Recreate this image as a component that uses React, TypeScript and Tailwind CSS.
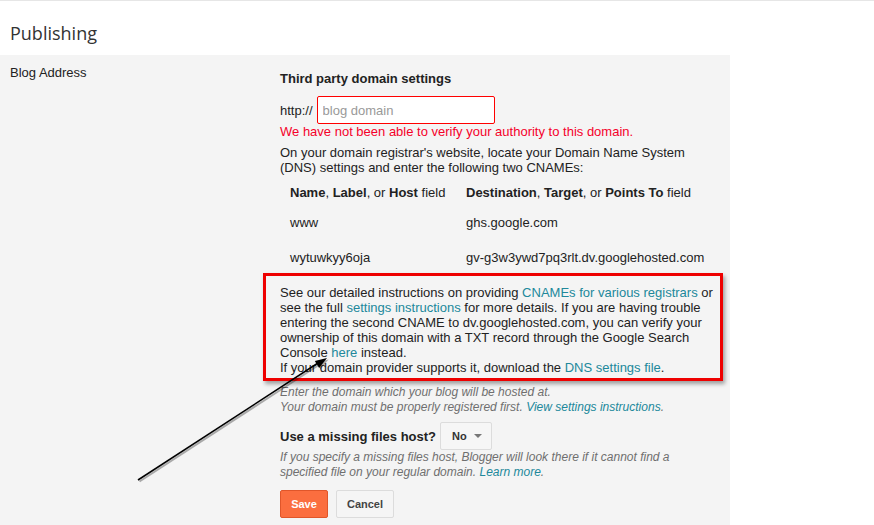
import React from "react";

const Link = ({ children }: { children: React.ReactNode }) => (
  <a className="text-[#21889b] cursor-pointer">{children}</a>
);

export default function App() {
  return (
    <div className="relative w-full min-h-[525px] bg-white border-t border-[#e6e6e6] font-['Liberation_Sans',Arial,sans-serif] text-[13px] leading-[15px] text-[#222] overflow-hidden">
      <div className="h-[54px] px-[10px] pt-[20px]">
        <h1 className="font-['Open_Sans',sans-serif] text-[18px] leading-[24px] text-[#333] font-normal">
          Publishing
        </h1>
      </div>

      <div className="flex w-[730px] min-h-[471px] bg-[#f4f4f4]">
        <div className="w-[280px] pl-[10px] pt-[10px]">Blog Address</div>

        <div className="w-[438px] pt-[16px] pb-[8px]">
          <div className="font-bold">Third party domain settings</div>

          <div className="mt-[10px] flex items-center">
            <span>http://</span>
            <input
              className="ml-[4px] w-[178px] h-[28px] bg-white border border-[#ff0000] rounded-[2px] px-[5px] text-[13px] outline-none placeholder:text-[#999] font-['Liberation_Sans',Arial,sans-serif]"
              placeholder="blog domain"
            />
          </div>
          <div className="text-[#f5002a]">
            We have not been able to verify your authority to this domain.
          </div>

          <p className="mt-[6px]">
            On your domain registrar's website, locate your Domain Name System
            (DNS) settings and enter the following two CNAMEs:
          </p>

          <div className="mt-[10px] pl-[10px]">
            <div className="grid grid-cols-[176px_1fr]">
              <div>
                <b>Name</b>, <b>Label</b>, or <b>Host</b> field
              </div>
              <div>
                <b>Destination</b>, <b>Target</b>, or <b>Points To</b> field
              </div>
            </div>
            <div className="mt-[15px] grid grid-cols-[176px_1fr]">
              <div>www</div>
              <div>ghs.google.com</div>
            </div>
            <div className="mt-[20px] grid grid-cols-[176px_1fr]">
              <div>wytuwkyy6oja</div>
              <div>gv-g3w3ywd7pq3rlt.dv.googlehosted.com</div>
            </div>
          </div>

          <div className="relative mt-[20px]">
            <p>
              See our detailed instructions on providing{" "}
              <Link>CNAMEs for various registrars</Link> or see the full{" "}
              <Link>settings instructions</Link> for more details. If you are
              having trouble entering the second CNAME to dv.googlehosted.com,
              you can verify your ownership of this domain with a TXT record
              through the Google Search Console <Link>here</Link> instead.
              <br />
              If your domain provider supports it, download the{" "}
              <Link>DNS settings file</Link>.
            </p>
            <span className="pointer-events-none absolute left-[-17px] right-[-5px] top-[-12px] bottom-[-6px] border-[3px] border-[#ee0000] shadow-[2px_3px_4px_rgba(0,0,0,0.35)]" />
          </div>

          <div className="mt-[10px] text-[12px] italic text-[#6f6f6f]">
            <div>Enter the domain which your blog will be hosted at.</div>
            <div>
              Your domain must be properly registered first.{" "}
              <Link>View settings instructions</Link>.
            </div>
          </div>

          <div className="mt-[7px] flex items-center">
            <span className="font-bold">Use a missing files host?</span>
            <div className="ml-[4px] flex h-[28px] w-[52px] items-center rounded-[2px] border border-[#dcdcdc] bg-[#f6f6f6] pl-[11px] pr-[9px]">
              <span className="text-[11px] font-bold text-[#333]">No</span>
              <svg className="ml-auto" width="8" height="4" viewBox="0 0 8 4">
                <path d="M0 0 L8 0 L4 4 Z" fill="#777" />
              </svg>
            </div>
          </div>

          <div className="text-[12px] italic text-[#6f6f6f]">
            If you specify a missing files host, Blogger will look there if it
            cannot find a specified file on your regular domain.{" "}
            <Link>Learn more</Link>.
          </div>

          <div className="mt-[10px] flex gap-[8px]">
            <button className="h-[28px] w-[48px] rounded-[2px] border border-[#e0562a] bg-[#fb6e3f] text-[11px] font-bold text-white">
              Save
            </button>
            <button className="h-[28px] w-[58px] rounded-[2px] border border-[#dcdcdc] bg-[#f5f5f5] text-[11px] font-bold text-[#444]">
              Cancel
            </button>
          </div>
        </div>
      </div>

      <svg
        className="pointer-events-none absolute left-0 top-0"
        width="874"
        height="525"
        viewBox="0 0 874 525"
      >
        <g transform="translate(1.5,1.5)" opacity="0.3">
          <line x1="138" y1="479" x2="318" y2="362" stroke="#000" strokeWidth="2" />
          <path d="M327 357 L319.1 366.9 L314.8 360.1 Z" fill="#000" />
        </g>
        <line x1="138" y1="479" x2="318" y2="362" stroke="#000" strokeWidth="1.5" />
        <path d="M327 357 L319.1 366.9 L314.8 360.1 Z" fill="#000" />
      </svg>
    </div>
  );
}
